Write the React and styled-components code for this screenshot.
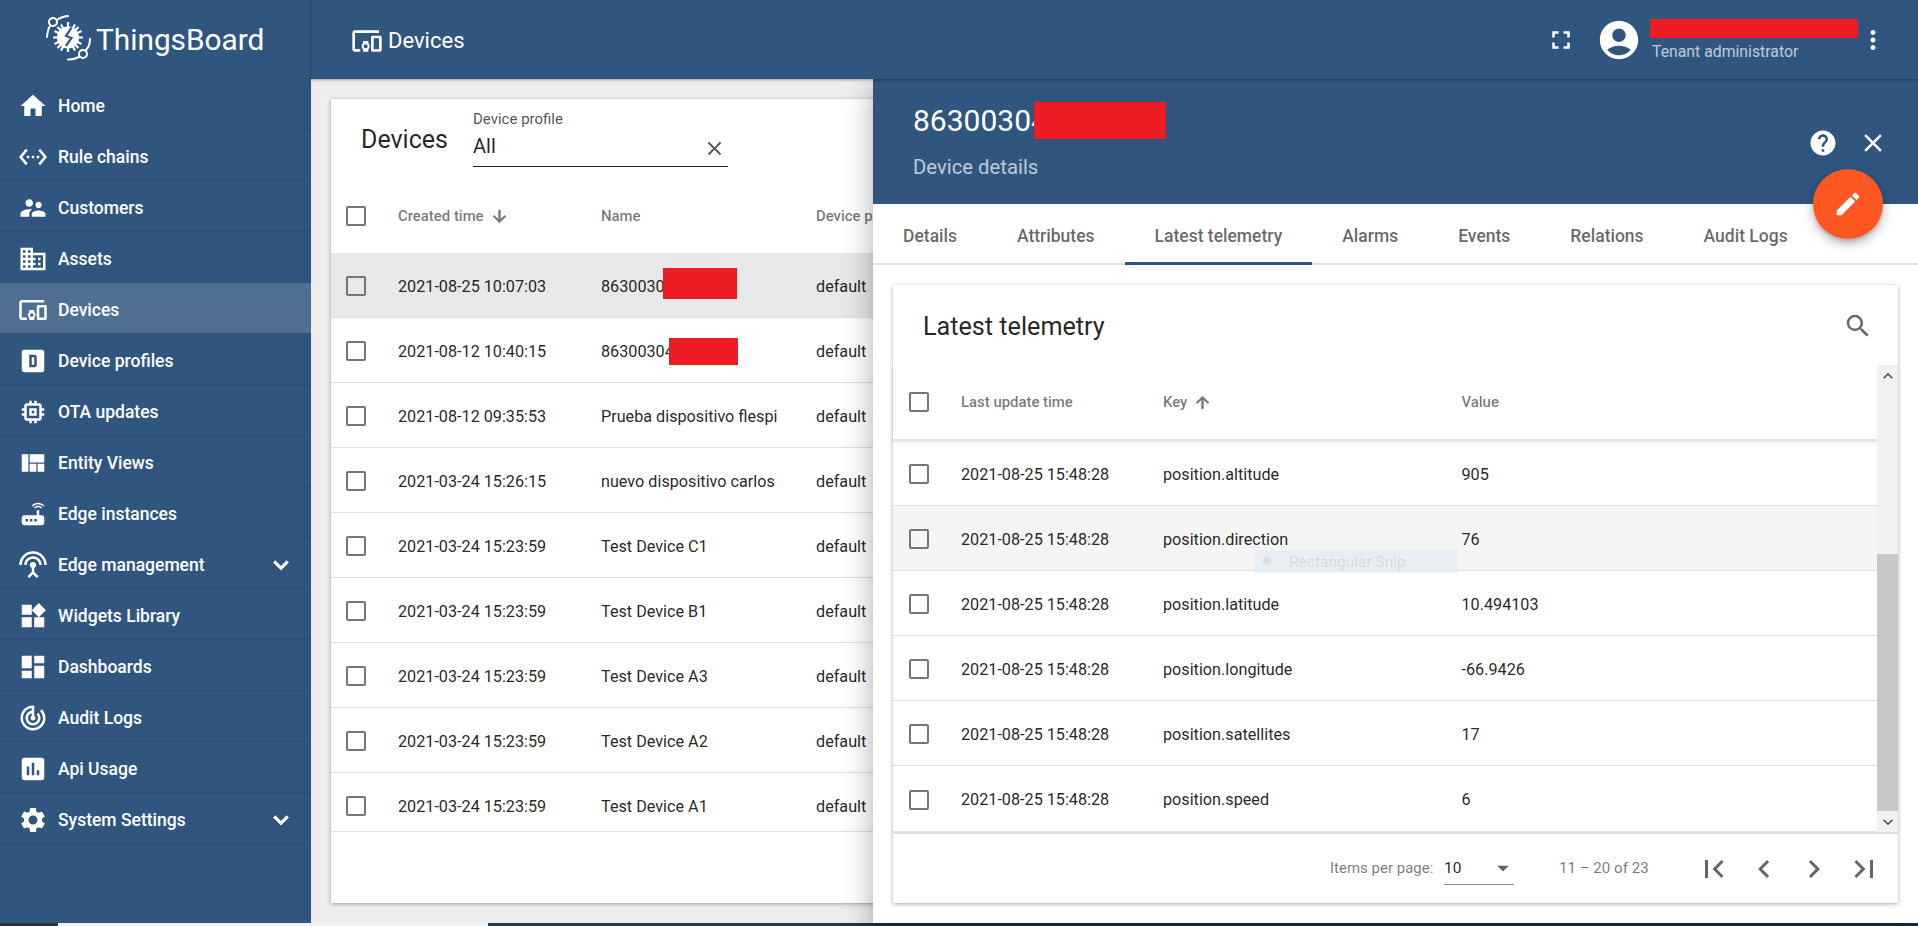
import React from 'react';
import styled, { createGlobalStyle } from 'styled-components';
import {
  MdHome, MdSettingsEthernet, MdSupervisorAccount, MdDomain, MdDevicesOther, MdMemory, MdViewQuilt, MdRouter,
  MdSettingsInputAntenna, MdWidgets, MdDashboard, MdTrackChanges, MdInsertChart, MdSettings, MdKeyboardArrowDown,
  MdFullscreen, MdAccountCircle, MdMoreVert, MdHelp, MdClose, MdEdit, MdSearch, MdArrowDownward, MdArrowUpward,
  MdFirstPage, MdChevronLeft, MdChevronRight, MdLastPage, MdArrowDropDown, MdKeyboardArrowUp,
} from 'react-icons/md';

const Global = createGlobalStyle`
  html, body { margin: 0; padding: 0; height: 100%; overflow: hidden; }
  body { font-family: Roboto, "Liberation Sans", sans-serif; background: #eee; }
  * { box-sizing: border-box; }
`;

const Page = styled.div`
  width: 1918px; height: 926px; position: relative; overflow: hidden; display: flex; flex-direction: column;
`;
const Work = styled.div`display: flex; height: 923px; flex: none;`;
const Side = styled.nav`width: 311px; flex: none; background: #305680; display: flex; flex-direction: column;`;
const Brand = styled.div`height: 79px; flex: none; display: flex; align-items: center; padding-left: 44px; gap: 2px; color: #fff;
  border-bottom: 1px solid #2a4d74;`;
const BrandName = styled.span`font-size: 29.8px; font-weight: 400; letter-spacing: 0;`;
const Item = styled.div`height: 51px; flex: none; display: flex; align-items: center; color: #fff; padding: 4px 0 0 18px;
  border-bottom: 1px solid #2a4d74; background: ${p => (p.$active ? '#4f6f93' : 'transparent')};
  font-size: 17.5px; font-weight: 500; position: relative;`;
const ItemIcon = styled.span`width: 30px; height: 30px; display: flex; margin-right: 10px; font-size: 30px;`;
const Caret = styled.span`margin-left: auto; margin-right: 15px; font-size: 30px; display: flex;
  svg path:not([fill="none"]) { stroke: currentColor; stroke-width: .7; }`;

const Right = styled.div`flex: 1; display: flex; flex-direction: column; min-width: 0;`;
const Top = styled.header`height: 79px; flex: none; background: #305680; display: flex; align-items: center; color: #fff;
  padding: 0 30px 0 39px; box-shadow: 0 1px 3px rgba(0,0,0,.35); position: relative; z-index: 3; border-left: 1px solid #2d5179;`;
const TopTitle = styled.div`display: flex; align-items: center; gap: 5px; font-size: 22px; padding-top: 2px;`;
const TopIcon = styled.span`display: flex; font-size: ${p => p.$s || 30}px; color: #fff; margin-left: ${p => p.$ml || 0}px;`;
const TopActions = styled.div`margin-left: auto; display: flex; align-items: center;`;
const User = styled.div`display: flex; flex-direction: column; margin: 0 0 0 8px; width: 208px;`;
const UserRole = styled.div`font-size: 15.8px; color: rgba(255,255,255,.7); margin-top: 4px; padding-left: 2px;`;
const Redact = styled.span`display: inline-block; flex: none; background: #ed1c24; width: ${p => p.$w}px; height: ${p => p.$h}px;
  margin-left: ${p => p.$ml || 0}px; margin-top: ${p => p.$mt || 0}px;`;

const Main = styled.main`flex: 1; padding: 20px 0 20px 20px; min-height: 0;`;
const Card = styled.section`width: 1000px; height: 804px; background: #fff; box-shadow: 0 1px 4px rgba(0,0,0,.35); display: flex; flex-direction: column;`;
const CardHead = styled.div`height: 80px; flex: none; display: flex; padding: 0 0 0 30px;`;
const CardTitle = styled.div`font-size: 25px; width: 112px; padding-top: 25px; line-height: 32px; color: rgba(0,0,0,.87);`;
const Field = styled.div`width: 255px; height: 68px; border-bottom: 1px solid #222; position: relative; display: flex; flex-direction: column;`;
const FieldLabel = styled.div`font-size: 15px; color: rgba(0,0,0,.7); margin-top: 10px; line-height: 20px;`;
const FieldValue = styled.div`font-size: 20px; line-height: 26px; margin-top: 4px; color: rgba(0,0,0,.87);`;
const FieldClear = styled.span`position: absolute; right: 2px; top: 38px; font-size: 23px; display: flex; color: #555;`;

const Row = styled.div`display: flex; align-items: center; flex: none; height: ${p => p.$h || 65}px; padding-top: ${p => p.$pt ?? 2.5}px;
  border-bottom: 1px solid #e0e0e0; background: ${p => p.$bg || 'transparent'}; font-size: 16.2px; color: rgba(0,0,0,.87); white-space: nowrap;`;
const HeadRow = styled(Row)`color: rgba(0,0,0,.54); font-size: 14.9px; font-weight: 500; border-bottom: 0;`;
const Cell = styled.div`display: flex; align-items: center; flex: none; width: ${p => p.$w}px;`;
const Box = styled.span`width: 19.5px; height: 20px; border: 2px solid #757575; border-radius: 2px; flex: none; margin-left: ${p => p.$ml}px;`;
const SortIcon = styled.span`display: flex; font-size: 19px; margin-left: 6px; color: #757575;
  svg path:not([fill="none"]) { stroke: currentColor; stroke-width: .9; }`;

const Drawer = styled.aside`position: absolute; left: 873px; top: 79px; width: 1045px; height: 844px; background: #fff;
  display: flex; flex-direction: column; z-index: 2;
  box-shadow: 0 8px 10px -5px rgba(0,0,0,.2), 0 16px 24px 2px rgba(0,0,0,.14), 0 6px 30px 5px rgba(0,0,0,.12);`;
const DHead = styled.div`height: 125px; flex: none; background: #305680; color: #fff; padding: 23px 0 0 40px; position: relative;`;
const DTitle = styled.div`display: flex; align-items: center; font-size: 30px; height: 37px;`;
const DSub = styled.div`font-size: 20.3px; color: rgba(255,255,255,.7); margin-top: 16px; line-height: 24px;`;
const DAction = styled.span`position: absolute; top: 49px; left: ${p => p.$l}px; font-size: 30px; display: flex; color: #fff;`;
const Fab = styled.span`position: absolute; left: 940px; top: 90px; width: 70px; height: 70px; border-radius: 50%; background: #ff5722; color: #fff;
  display: flex; align-items: center; justify-content: center; font-size: 30px; z-index: 4;
  box-shadow: 0 3px 5px -1px rgba(0,0,0,.2), 0 6px 10px rgba(0,0,0,.14), 0 1px 18px rgba(0,0,0,.12);`;
const Tabs = styled.div`height: 61px; flex: none; display: flex; border-bottom: 2px solid #e0e0e0;`;
const Tab = styled.div`height: 61px; padding: 5px 30px 0 30px; display: flex; align-items: center; font-size: 17.5px; font-weight: 500;
  color: rgba(0,0,0,.6); border-bottom: 3px solid ${p => (p.$on ? '#305680' : 'transparent')};`;
const DBody = styled.div`flex: 1; padding: 20px; min-height: 0;`;
const TCard = styled.section`width: 1005px; height: 618px; background: #fff; box-shadow: 0 1px 4px rgba(0,0,0,.35); display: flex; flex-direction: column;`;
const THead = styled.div`height: 80px; flex: none; display: flex; align-items: center; justify-content: space-between; padding: 2px 25px 0 30px;`;
const TTitle = styled.div`font-size: 25.2px; color: rgba(0,0,0,.87);`;
const TIcon = styled.span`display: flex; font-size: 30px; color: #666;`;
const Scroll = styled.div`height: 467px; flex: none; display: flex; position: relative;`;
const Rows = styled.div`flex: 1; display: flex; flex-direction: column; min-width: 0;`;
const StickyRow = styled(HeadRow)`border-bottom: 2px solid #e0e0e0; box-shadow: 0 2px 2px rgba(0,0,0,.06);`;
const Bar = styled.div`width: 21px; flex: none; background: #f1f1f1; display: flex; flex-direction: column; align-items: center; justify-content: space-between; position: relative;`;
const Thumb = styled.div`position: absolute; left: 0; right: 0; top: 189px; height: 257px; background: #c8c8c8;`;
const BarIcon = styled.span`display: flex; font-size: 20px; color: #505050; height: 21px; align-items: center; z-index: 1;`;
const Pager = styled.div`flex: 1; border-top: 2px solid #ddd; display: flex; align-items: center; color: rgba(0,0,0,.54); font-size: 15px;`;
const PagerLabel = styled.div`margin: -2px 0 0 437px; width: 114px;`;
const PagerSelect = styled.div`width: 70px; height: 31px; margin-top: 2px; border-bottom: 1px solid #8a8a8a; display: flex; align-items: center; justify-content: space-between; color: rgba(0,0,0,.87); font-size: 15.5px; padding-bottom: 3px;`;
const PagerArrow = styled.span`display: flex; font-size: 28px; color: #666; margin-right: -3px;`;
const PagerCount = styled.div`margin: -2px 0 0 45px; width: 129.5px; font-size: 15.1px;`;
const PageBtn = styled.span`display: flex; font-size: 36px; width: 50px; justify-content: center; color: #666;`;
const Snip = styled.div`position: absolute; left: 362px; top: 185px; width: 202px; height: 23px; background: rgba(222,232,246,.5); color: rgba(0,0,0,.1);
  font-size: 15.5px; display: flex; align-items: center; padding-left: 34px;`;
const SnipDot = styled.span`position: absolute; left: 8px; top: 7px; width: 8px; height: 8px; border-radius: 50%; background: rgba(0,0,0,.06);`;
const Strip = styled.div`height: 3px; flex: none; background: #26353f; display: flex; padding-left: 58px;`;
const StripLight = styled.div`width: 430px; background: #f2f2f2;`;

const DProfile = () => (
  <svg viewBox="0 0 24 24" width="1em" height="1em" fill="currentColor">
    <path fillRule="evenodd" d="M9,7V17H13A2,2 0 0,0 15,15V9A2,2 0 0,0 13,7H9M11,9H13V15H11V9M5,3H19A2,2 0 0,1 21,5V19A2,2 0 0,1 19,21H5C3.89,21 3,20.1 3,19V5A2,2 0 0,1 5,3Z" />
  </svg>
);
const Logo = () => (
  <svg viewBox="0 0 50 50" width="50" height="50" fill="none" stroke="#fff" strokeLinecap="round">
    <path d="M3 23C3.5 18 4 15 6 12" strokeWidth="2" />
    <circle cx="9" cy="8" r="4" strokeWidth="2" />
    <path d="M13 6C16 3.5 20 2.5 24 2" strokeWidth="2" />
    <circle cx="39" cy="40" r="4" strokeWidth="2" />
    <path d="M35 43C31 45 28 46 24 45.5" strokeWidth="2" />
    <path d="M42 36C45 33 46 29 46 25" strokeWidth="2" />
    <circle cx="24" cy="23.5" r="11" fill="#fff" stroke="none" />
    <path d="M24 8V38M9 23.5H39M13.5 13L34.5 34M34.5 13L13.5 34M17 10.5L31 36.5M31 10.5L17 36.5M10.5 17L37.5 30M10.5 30L37.5 17" strokeWidth="2.2" strokeLinecap="butt" />
    <path d="M27 14.5L22 22L27.5 24L22.5 31" stroke="#305680" strokeWidth="2.2" strokeLinecap="square" />
  </svg>
);

const nav = [
  ['Home', <MdHome />], ['Rule chains', <MdSettingsEthernet />], ['Customers', <MdSupervisorAccount />], ['Assets', <MdDomain />],
  ['Devices', <MdDevicesOther />, true], ['Device profiles', <DProfile />], ['OTA updates', <MdMemory />], ['Entity Views', <MdViewQuilt />],
  ['Edge instances', <MdRouter />], ['Edge management', <MdSettingsInputAntenna />, false, true], ['Widgets Library', <MdWidgets />],
  ['Dashboards', <MdDashboard />], ['Audit Logs', <MdTrackChanges />], ['Api Usage', <MdInsertChart />], ['System Settings', <MdSettings />, false, true],
];
const devices = [
  { t: '2021-08-25 10:07:03', n: '8630030', bg: '#e8e8e8', red: { w: 74, h: 31, ml: -2, mt: -6 } },
  { t: '2021-08-12 10:40:15', n: '86300304', red: { w: 69, h: 27, ml: -5 } },
  { t: '2021-08-12 09:35:53', n: 'Prueba dispositivo flespi' },
  { t: '2021-03-24 15:26:15', n: 'nuevo dispositivo carlos' },
  { t: '2021-03-24 15:23:59', n: 'Test Device C1' },
  { t: '2021-03-24 15:23:59', n: 'Test Device B1' },
  { t: '2021-03-24 15:23:59', n: 'Test Device A3' },
  { t: '2021-03-24 15:23:59', n: 'Test Device A2' },
  { t: '2021-03-24 15:23:59', n: 'Test Device A1', h: 59, pt: 8 },
];
const telemetry = [['altitude', '905'], ['direction', '76'], ['latitude', '10.494103'], ['longitude', '-66.9426'], ['satellites', '17'], ['speed', '6']];
const tabs = ['Details', 'Attributes', 'Latest telemetry', 'Alarms', 'Events', 'Relations', 'Audit Logs'];

export default function App() {
  return (
    <Page>
      <Global />
      <Work>
        <Side>
          <Brand><Logo /><BrandName>ThingsBoard</BrandName></Brand>
          {nav.map(([label, icon, active, caret]) => (
            <Item key={label} $active={active}>
              <ItemIcon>{icon}</ItemIcon>{label}
              {caret && <Caret><MdKeyboardArrowDown /></Caret>}
            </Item>
          ))}
        </Side>
        <Right>
          <Top>
            <TopTitle><TopIcon $s={32}><MdDevicesOther /></TopIcon>Devices</TopTitle>
            <TopActions>
              <TopIcon $s={30}><MdFullscreen /></TopIcon>
              <TopIcon $s={46} $ml={20}><MdAccountCircle /></TopIcon>
              <User>
                <Redact $w={208} $h={19} />
                <UserRole>Tenant administrator</UserRole>
              </User>
              <TopIcon $s={30}><MdMoreVert /></TopIcon>
            </TopActions>
          </Top>
          <Main>
            <Card>
              <CardHead>
                <CardTitle>Devices</CardTitle>
                <Field>
                  <FieldLabel>Device profile</FieldLabel>
                  <FieldValue>All</FieldValue>
                  <FieldClear><MdClose /></FieldClear>
                </Field>
              </CardHead>
              <HeadRow $h={74} $pt={0}>
                <Cell $w={67}><Box $ml={15} /></Cell>
                <Cell $w={203}>Created time<SortIcon><MdArrowDownward /></SortIcon></Cell>
                <Cell $w={215}>Name</Cell>
                <Cell $w={120}>Device profile</Cell>
              </HeadRow>
              {devices.map((d, i) => (
                <Row key={i} $bg={d.bg} $h={d.h} $pt={d.pt}>
                  <Cell $w={67}><Box $ml={15} /></Cell>
                  <Cell $w={203}>{d.t}</Cell>
                  <Cell $w={215}>{d.n}{d.red && <Redact $w={d.red.w} $h={d.red.h} $ml={d.red.ml} $mt={d.red.mt} />}</Cell>
                  <Cell $w={120}>default</Cell>
                </Row>
              ))}
            </Card>
          </Main>
        </Right>
      </Work>
      <Strip><StripLight /></Strip>
      <Drawer>
        <DHead>
          <DTitle>86300304<Redact $w={132} $h={37} $ml={-14} /></DTitle>
          <DSub>Device details</DSub>
          <DAction $l={935}><MdHelp /></DAction>
          <DAction $l={985}><MdClose /></DAction>
        </DHead>
        <Fab><MdEdit /></Fab>
        <Tabs>
          {tabs.map(t => <Tab key={t} $on={t === 'Latest telemetry'}>{t}</Tab>)}
        </Tabs>
        <DBody>
          <TCard>
            <THead>
              <TTitle>Latest telemetry</TTitle>
              <TIcon><MdSearch /></TIcon>
            </THead>
            <Scroll>
              <Rows>
                <StickyRow $h={76} $pt={0}>
                  <Cell $w={68}><Box $ml={16} /></Cell>
                  <Cell $w={202}>Last update time</Cell>
                  <Cell $w={298.5}>Key<SortIcon><MdArrowUpward /></SortIcon></Cell>
                  <Cell $w={200}>Value</Cell>
                </StickyRow>
                {telemetry.map(([k, v], i) => (
                  <Row key={k} $bg={k === 'direction' ? '#f5f5f5' : undefined} $h={i === 5 ? 66 : 65}>
                    <Cell $w={68}><Box $ml={16} /></Cell>
                    <Cell $w={202}>2021-08-25 15:48:28</Cell>
                    <Cell $w={298.5}>position.{k}</Cell>
                    <Cell $w={200}>{v}</Cell>
                  </Row>
                ))}
              </Rows>
              <Bar>
                <Thumb />
                <BarIcon><MdKeyboardArrowUp /></BarIcon>
                <BarIcon><MdKeyboardArrowDown /></BarIcon>
              </Bar>
              <Snip><SnipDot />Rectangular Snip</Snip>
            </Scroll>
            <Pager>
              <PagerLabel>Items per page:</PagerLabel>
              <PagerSelect>10<PagerArrow><MdArrowDropDown /></PagerArrow></PagerSelect>
              <PagerCount>11 – 20 of 23</PagerCount>
              <PageBtn><MdFirstPage /></PageBtn>
              <PageBtn><MdChevronLeft /></PageBtn>
              <PageBtn><MdChevronRight /></PageBtn>
              <PageBtn><MdLastPage /></PageBtn>
            </Pager>
          </TCard>
        </DBody>
      </Drawer>
    </Page>
  );
}
